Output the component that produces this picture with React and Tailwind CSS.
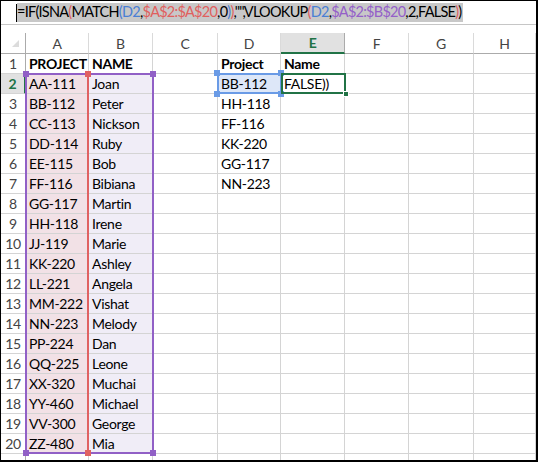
import React from "react";

const COLS = ["A", "B", "C", "D", "E", "F", "G", "H"];

const PROJECTS = [
  "AA-111", "BB-112", "CC-113", "DD-114", "EE-115", "FF-116", "GG-117",
  "HH-118", "JJ-119", "KK-220", "LL-221", "MM-222", "NN-223", "PP-224",
  "QQ-225", "XX-320", "YY-460", "VV-300", "ZZ-480",
];
const NAMES = [
  "Joan", "Peter", "Nickson", "Ruby", "Bob", "Bibiana", "Martin", "Irene",
  "Marie", "Ashley", "Angela", "Vishat", "Melody", "Dan", "Leone", "Muchai",
  "Michael", "George", "Mia",
];
const LOOKUPS = ["BB-112", "HH-118", "FF-116", "KK-220", "GG-117", "NN-223"];

const font = { fontFamily: "Lato, 'Liberation Sans', sans-serif" };

function Handle({ className }) {
  return <div className={"absolute w-[6px] h-[6px] " + className} />;
}

function cellText(row, col) {
  if (row === 1) {
    if (col === "A") return "PROJECT";
    if (col === "B") return "NAME";
    if (col === "D") return "Project";
    if (col === "E") return "Name";
    return "";
  }
  const i = row - 2;
  if (col === "A") return PROJECTS[i] || "";
  if (col === "B") return NAMES[i] || "";
  if (col === "D") return LOOKUPS[i] || "";
  if (col === "E" && row === 2) return "FALSE))";
  return "";
}

function cellBg(row, col) {
  if (row === 2 && col === "D") return "bg-[#dde7f8]";
  if (row < 2 || row > 20) return "";
  if (col === "A") return "bg-[#f2e1e6]";
  if (col === "B") return "bg-[#f0edf7]";
  return "";
}

export default function App() {
  const rows = Array.from({ length: 21 }, (_, i) => i + 1);

  return (
    <div
      className="w-[538px] h-[462px] bg-white border-t border-l border-r-2 border-b-2 border-black overflow-hidden flex flex-col"
      style={font}
    >
      {/* formula bar */}
      <div className="h-[24px] shrink-0 border-b border-[#c6c6c6] flex items-center pl-[15px]">
        <div className="w-px h-[18px] bg-black" />
        <div className="h-[19px] bg-[#c8c8c8] flex items-center pr-[2px] text-[14.5px] tracking-[-0.75px] leading-none text-black whitespace-nowrap">
          =IF(ISNA<span className="text-[#e0605e]">(</span>MATCH
          <span className="text-[#4a7fd4]">(</span>
          <span className="text-[#4a7fd4]">D2</span>,
          <span className="text-[#e0605e]">$A$2:$A$20</span>,0
          <span className="text-[#4a7fd4]">)</span>
          <span className="text-[#e0605e]">)</span>,"",VLOOKUP
          <span className="text-[#e0605e]">(</span>
          <span className="text-[#4a7fd4]">D2</span>,
          <span className="text-[#9460c8]">$A$2:$B$20</span>,2,FALSE
          <span className="text-[#e0605e]">)</span>)
        </div>
      </div>

      <div className="h-[8px] shrink-0" />

      {/* sheet grid */}
      <div className="relative grid grid-cols-[25px_63px_64px_65px_63px_64px_64px_65px_1fr] grid-rows-[21px] auto-rows-[20px] text-[14px] tracking-[-0.3px] text-black">
        {/* header row */}
        <div className="border-r border-b border-[#ababab] flex items-end justify-end p-[6px]">
          <div className="w-0 h-0 border-l-[7px] border-l-transparent border-b-[7px] border-b-[#dcdcdc]" />
        </div>
        {COLS.map((c) =>
          c === "E" ? (
            <div
              key={c}
              className="bg-[#e1e1e1] border-r border-[#ababab] border-b-2 border-b-[#217346] flex items-center justify-center font-bold text-[#217346]"
            >
              {c}
            </div>
          ) : (
            <div
              key={c}
              className="border-r border-[#dadada] border-b border-b-[#ababab] flex items-center justify-center text-[#444]"
            >
              {c}
            </div>
          )
        )}

        {rows.map((r) => (
          <React.Fragment key={r}>
            {r === 2 ? (
              <div className="bg-[#e1e1e1] border-r-2 border-[#217346] border-b border-b-[#d4d4d4] flex items-center justify-center font-bold text-[#217346]">
                {r}
              </div>
            ) : (
              <div className="border-r border-[#ababab] border-b border-b-[#d4d4d4] flex items-center justify-center text-[#444]">
                {r <= 20 ? r : ""}
              </div>
            )}
            {COLS.map((c) => (
              <div
                key={c}
                className={
                  "border-r border-b border-[#d4d4d4] flex items-center pl-[3px] whitespace-nowrap overflow-visible " +
                  cellBg(r, c) +
                  (r === 1 ? " font-bold" : "")
                }
              >
                {cellText(r, c)}
              </div>
            ))}
          </React.Fragment>
        ))}

        {/* range A2:B20 (purple) */}
        <div className="absolute left-[24px] top-[40px] w-[129px] h-[381px] border-2 border-[#9160c6] pointer-events-none" />
        <Handle className="left-[22px] top-[38px] bg-[#9160c6]" />
        <Handle className="left-[149px] top-[38px] bg-[#9160c6]" />
        <Handle className="left-[22px] top-[417px] bg-[#9160c6]" />
        <Handle className="left-[149px] top-[417px] bg-[#9160c6]" />

        {/* range A2:A20 (red) */}
        <div className="absolute left-[86px] top-[40px] w-[2px] h-[381px] bg-[#e06262]" />
        <Handle className="left-[84px] top-[38px] bg-[#e06262]" />
        <Handle className="left-[84px] top-[417px] bg-[#e06262]" />

        {/* D2 reference */}
        <div className="absolute left-[216px] top-[40px] w-[65px] h-[21px] border-2 border-[#6a9be6]" />
        <Handle className="left-[213px] top-[37px] bg-[#6a9be6]" />
        <Handle className="left-[277px] top-[37px] bg-[#6a9be6]" />
        <Handle className="left-[213px] top-[58px] bg-[#6a9be6]" />
        <Handle className="left-[277px] top-[58px] bg-[#6a9be6]" />

        {/* active cell E2 */}
        <div className="absolute left-[280px] top-[40px] w-[65px] h-[21px] border-2 border-[#217346]" />
        <Handle className="left-[342px] top-[58px] w-[5px] h-[5px] bg-[#217346] border border-white" />
      </div>
    </div>
  );
}
